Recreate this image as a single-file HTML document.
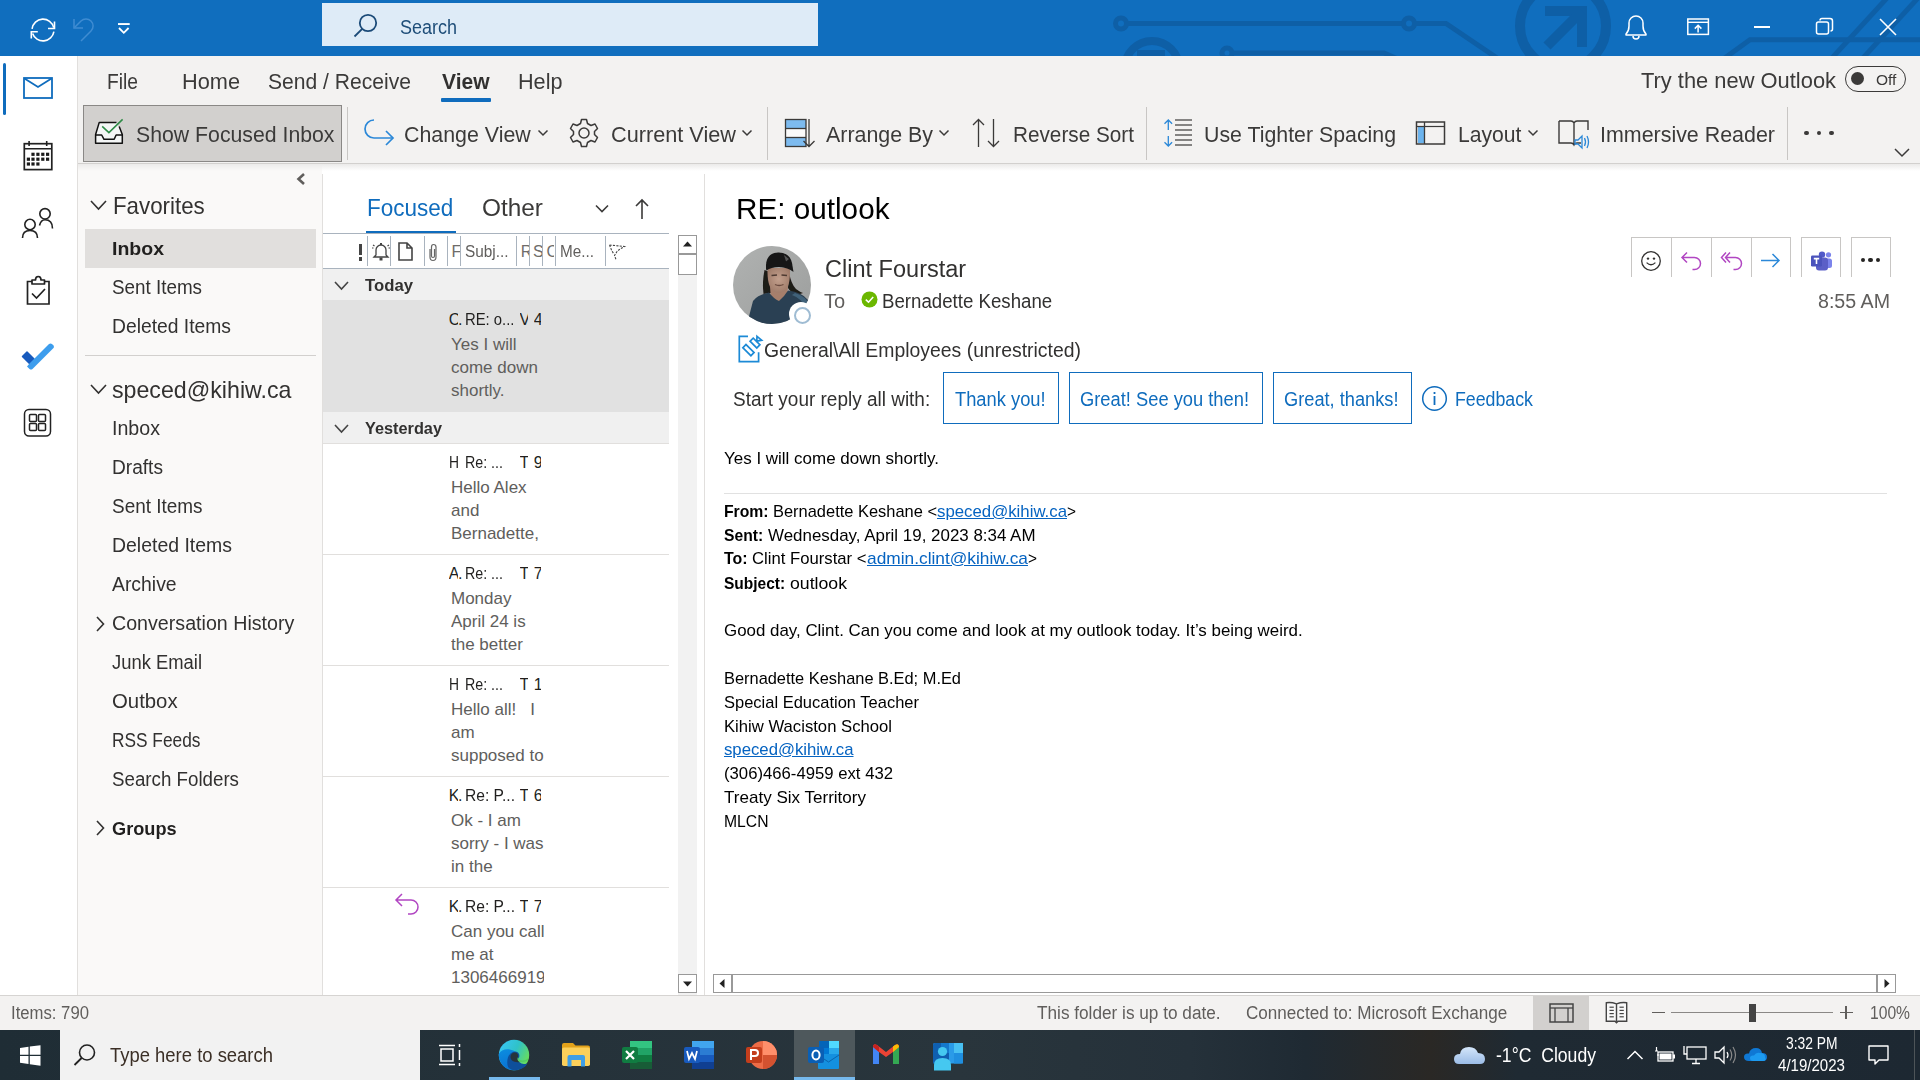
<!DOCTYPE html>
<html><head><meta charset="utf-8"><title>Outlook</title>
<style>
html,body{margin:0;padding:0;width:1920px;height:1080px;overflow:hidden;background:#fff;position:relative;font-family:"Liberation Sans", sans-serif}
.t{position:absolute;white-space:pre;line-height:1;transform-origin:0 0}
svg{overflow:visible}
</style></head><body>
<div style="position:absolute;left:0px;top:0px;width:1920px;height:56px;background:#106ebe"></div>
<div style="position:absolute;left:0px;top:56px;width:77px;height:939px;background:#ffffff"></div>
<div style="position:absolute;left:77px;top:56px;width:1px;height:939px;background:#e1dfdd"></div>
<div style="position:absolute;left:78px;top:56px;width:1842px;height:107px;background:#f3f2f1"></div>
<div style="position:absolute;left:78px;top:163px;width:1842px;height:1px;background:#d2d0ce"></div>
<div style="position:absolute;left:78px;top:164px;width:1842px;height:7px;background:linear-gradient(#ebeae9,rgba(255,255,255,0))"></div>
<div style="position:absolute;left:78px;top:171px;width:244px;height:824px;background:#faf9f8"></div>
<div style="position:absolute;left:78px;top:164px;width:244px;height:7px;background:linear-gradient(#ecebea,#faf9f8)"></div>
<div style="position:absolute;left:322px;top:174px;width:1px;height:821px;background:#e1dfdd"></div>
<div style="position:absolute;left:323px;top:171px;width:382px;height:824px;background:#ffffff"></div>
<div style="position:absolute;left:704px;top:174px;width:1px;height:821px;background:#e1dfdd"></div>
<div style="position:absolute;left:705px;top:171px;width:1215px;height:824px;background:#ffffff"></div>
<div style="position:absolute;left:0px;top:996px;width:1920px;height:34px;background:#f3f2f1"></div>
<div style="position:absolute;left:0px;top:995px;width:1920px;height:1px;background:#d6d4d2"></div>
<div style="position:absolute;left:0px;top:1030px;width:1920px;height:50px;background:linear-gradient(90deg,#1f2d35 0%,#25323a 30%,#29353c 50%,#25313a 62%,#1f2a33 68%,#2a2825 74.5%,#1f2a33 79%,#1d2832 100%)"></div>
<svg style="position:absolute;left:1100px;top:0px;overflow:hidden;" width="820" height="56" viewBox="0 0 820 56">
<g fill="none" stroke="#0e5fa6" stroke-width="5">
<circle cx="21" cy="23.5" r="5.5"/>
<line x1="27" y1="23.5" x2="303" y2="23.5"/>
<circle cx="309" cy="23.5" r="5.5"/>
<polyline points="315,23.5 346,23.5 400,60"/>
<circle cx="52" cy="68" r="27" stroke-width="8"/>
<circle cx="127" cy="53" r="5"/>
<polyline points="132,53 284,53 300,60"/>
<circle cx="463" cy="26" r="43" stroke-width="10"/>
<polyline points="622,60 650,39.7 820,39.7"/>
<line x1="732" y1="58" x2="787" y2="-2"/>
<line x1="763" y1="58" x2="818" y2="-2"/>
</g>
<rect x="37" y="50" width="28" height="12" fill="#0e5fa6"/>
<g fill="#0e5fa6"><rect x="445" y="6" width="42" height="10"/><rect x="477" y="6" width="10" height="41"/></g>
<line x1="447" y1="46" x2="482" y2="11" stroke="#0e5fa6" stroke-width="10"/>
</svg>
<svg style="position:absolute;left:29px;top:17px;" width="28" height="28" viewBox="0 0 28 28"><g fill="none" stroke="#fff" stroke-width="1.6"><path d="M3.07 11.8 A11 11 0 0 1 24.7 10.6"/><path d="M24.9 14.6 A11 11 0 0 1 3.6 16.4"/><path d="M25.5 4.5 L25.5 11.5 L19 11.5"/><path d="M2.3 21.5 L2.3 14.8 L8.8 14.8"/></g></svg>
<svg style="position:absolute;left:71px;top:16px;" width="28" height="28" viewBox="0 0 28 28"><g fill="none" stroke="#3f8cd2" stroke-width="1.5">
<path d="M3 3 L3 12 L12 12"/><path d="M3.5 11.5 L10 5 A7 7 0 0 1 20 15 L10 25"/></g></svg>
<svg style="position:absolute;left:116px;top:20px;" width="16" height="16" viewBox="0 0 16 16"><rect x="2" y="3.1" width="11.7" height="1.9" fill="#fff"/><path d="M3 8 L7.8 12.8 L12.6 8" fill="none" stroke="#fff" stroke-width="1.8"/></svg>
<div style="position:absolute;left:322px;top:3px;width:496px;height:43px;background:#deebf7"></div>
<svg style="position:absolute;left:350px;top:11px;" width="30" height="28" viewBox="0 0 30 28"><circle cx="18" cy="12" r="8.2" fill="none" stroke="#1b4a78" stroke-width="1.8"/><line x1="12.2" y1="17.8" x2="4.5" y2="25.5" stroke="#1b4a78" stroke-width="1.8"/></svg>
<svg style="position:absolute;left:1622px;top:12px;" width="28" height="32" viewBox="0 0 28 32"><path d="M4 23 L4 22 Q7 19 7 14 L7 11 A7 7 0 0 1 21 11 L21 14 Q21 19 24 22 L24 23 Z" fill="none" stroke="#fff" stroke-width="1.5" stroke-linejoin="round"/><path d="M11 24 A3 3 0 0 0 17 24" fill="none" stroke="#fff" stroke-width="1.5"/></svg>
<svg style="position:absolute;left:1686px;top:16px;" width="26" height="22" viewBox="0 0 26 22"><rect x="1.8" y="3" width="20.6" height="15.4" fill="none" stroke="#fff" stroke-width="1.5"/><line x1="1.8" y1="6.3" x2="22.4" y2="6.3" stroke="#fff" stroke-width="1.4"/><path d="M12.1 16.5 L12.1 9.5 M8.8 12.6 L12.1 9.3 L15.4 12.6" fill="none" stroke="#fff" stroke-width="1.5"/></svg>
<div style="position:absolute;left:1754px;top:26px;width:16px;height:2px;background:#fff"></div>
<svg style="position:absolute;left:1815px;top:17px;" width="20" height="20" viewBox="0 0 20 20"><rect x="1.5" y="5" width="12" height="12" rx="2" fill="none" stroke="#fff" stroke-width="1.5"/><path d="M5 3.5 Q5 1.5 7 1.5 L15 1.5 Q17.5 1.5 17.5 4 L17.5 12 Q17.5 14 15.5 14" fill="none" stroke="#fff" stroke-width="1.5"/></svg>
<svg style="position:absolute;left:1879px;top:18px;" width="18" height="18" viewBox="0 0 18 18"><path d="M1 1 L17 17 M17 1 L1 17" stroke="#fff" stroke-width="1.6"/></svg>
<div style="position:absolute;left:3px;top:63px;width:3px;height:52px;background:#0f6cbd;border-radius:2px"></div>
<svg style="position:absolute;left:22px;top:76px;" width="32" height="24" viewBox="0 0 32 24"><rect x="2" y="2" width="28" height="20" fill="none" stroke="#0f6cbd" stroke-width="1.8"/><path d="M2.5 2.5 L16 11 L29.5 2.5" fill="none" stroke="#0f6cbd" stroke-width="1.8"/></svg>
<svg style="position:absolute;left:22px;top:140px;" width="32" height="32" viewBox="0 0 32 32"><rect x="2.3" y="3.7" width="27.5" height="25.9" fill="none" stroke="#222" stroke-width="1.7"/><line x1="2.3" y1="8.75" x2="29.8" y2="8.75" stroke="#222" stroke-width="1.5"/><line x1="7.1" y1="1" x2="7.1" y2="6" stroke="#222" stroke-width="1.6"/><line x1="24.7" y1="1" x2="24.7" y2="6" stroke="#222" stroke-width="1.6"/><rect x="9.4" y="12.7" width="3.2" height="3.2" fill="#1a1a1a"/><rect x="14.3" y="12.7" width="3.2" height="3.2" fill="#1a1a1a"/><rect x="19.2" y="12.7" width="3.2" height="3.2" fill="#1a1a1a"/><rect x="24.0" y="12.7" width="3.2" height="3.2" fill="#1a1a1a"/><rect x="4.8" y="17.6" width="3.2" height="3.2" fill="#1a1a1a"/><rect x="9.4" y="17.6" width="3.2" height="3.2" fill="#1a1a1a"/><rect x="14.3" y="17.6" width="3.2" height="3.2" fill="#1a1a1a"/><rect x="19.2" y="17.6" width="3.2" height="3.2" fill="#1a1a1a"/><rect x="24.0" y="17.6" width="3.2" height="3.2" fill="#1a1a1a"/><rect x="4.8" y="22.4" width="3.2" height="3.2" fill="#1a1a1a"/><rect x="9.4" y="22.4" width="3.2" height="3.2" fill="#1a1a1a"/><rect x="14.3" y="22.4" width="3.2" height="3.2" fill="#1a1a1a"/></svg>
<svg style="position:absolute;left:20px;top:205px;" width="36" height="36" viewBox="0 0 36 36"><g fill="none" stroke="#222" stroke-width="1.6"><circle cx="10" cy="19.5" r="5.2"/><path d="M2.5 33 Q2.5 25.5 10 25.5 Q17.5 25.5 17.5 33"/><circle cx="25" cy="8.8" r="5.2"/><path d="M19.5 20.5 Q21 14.8 25 14.8 Q32.5 14.8 32.5 23.5"/></g></svg>
<svg style="position:absolute;left:24px;top:272px;" width="28" height="36" viewBox="0 0 28 36"><g fill="none" stroke="#222" stroke-width="1.7"><path d="M8 9.5 L3.5 9.5 L3.5 32 L25 32 L25 9.5 L20.5 9.5"/><path d="M8 12 L8 8 L11.5 8 Q11.5 4.5 14.25 4.5 Q17 4.5 17 8 L20.5 8 L20.5 12 Z" stroke-linejoin="round"/><path d="M8 21.5 L12.5 26 L21 17"/></g></svg>
<svg style="position:absolute;left:20px;top:340px;" width="36" height="32" viewBox="0 0 36 32"><path d="M2.5 16.5 L7 12 L14 19 L9.5 23.5 Z" fill="#185abd" stroke="#185abd" stroke-width="1.5" stroke-linejoin="round"/><path d="M9.5 23.5 L29 4 Q30.5 2.8 32 4 L33.5 5.5 Q34.5 7 33.5 8 L12.5 29 Q11 30 9.5 29 L7 26.5 Z" fill="#3d9ded"/><path d="M7.5 26 L14 19.5 L9.5 15 L5 20 Z" fill="#2b7cd3" opacity="0"/></svg>
<svg style="position:absolute;left:22px;top:407px;" width="32" height="32" viewBox="0 0 32 32"><g fill="none" stroke="#222" stroke-width="1.5"><rect x="2.5" y="2.5" width="26" height="26.5" rx="4.5"/><rect x="7.5" y="7.5" width="7" height="7" rx="1"/><rect x="16.5" y="7.5" width="7" height="7" rx="1"/><rect x="7.5" y="16.5" width="7" height="7" rx="1"/><rect x="16.5" y="16.5" width="7" height="7" rx="1"/></g></svg>
<div style="position:absolute;left:441px;top:98px;width:50px;height:4px;background:#0f6cbd;border-radius:1px"></div>
<div style="position:absolute;left:1845px;top:66px;width:61px;height:26px;border:1.3px solid #3b3a39;border-radius:13px;box-sizing:border-box"></div>
<div style="position:absolute;left:1850.5px;top:71.6px;width:13.6px;height:13.6px;background:#3b3a39;border-radius:50%"></div>
<div style="position:absolute;left:83px;top:105px;width:259px;height:57px;background:#d2d0ce;border:1px solid #8a8886;box-sizing:border-box"></div>
<svg style="position:absolute;left:93px;top:117px;" width="32" height="28" viewBox="0 0 32 28"><path d="M6.25 5.4 L23.5 5.4 L29.3 17.5 L29.3 26.3 L2.6 26.3 L2.6 17.5 Z" fill="#f4f6f6"/><path d="M23.5 5.4 L6.25 5.4 L2.6 17.5 L2.6 26.3 L29.3 26.3 L29.3 17.5 L26.2 9.5" fill="none" stroke="#111" stroke-width="1.5" stroke-linejoin="round"/><path d="M2.6 18 L8.7 18 L11 22.3 L21.2 22.3 L23.1 18 L29.3 18" fill="none" stroke="#111" stroke-width="1.5" stroke-linejoin="round"/><path d="M9.2 9.4 L15.9 15.6 L29.6 2.4" fill="none" stroke="#2e8b47" stroke-width="1.5"/></svg>
<div style="position:absolute;left:347px;top:107px;width:1px;height:53px;background:#c8c6c4"></div>
<svg style="position:absolute;left:364px;top:117px;" width="32" height="32" viewBox="0 0 32 32"><path d="M10 3 A9 9 0 0 0 10 21 L28 21" fill="none" stroke="#2b88d8" stroke-width="1.7"/><path d="M22 14 L29 21 L22 28" fill="none" stroke="#2b88d8" stroke-width="1.7"/></svg>
<svg style="position:absolute;left:537px;top:128.5px;" width="12" height="8" viewBox="0 0 12 8"><path d="M1.5 1.5 L6 6 L10.5 1.5" fill="none" stroke="#3b3a39" stroke-width="1.5"/></svg>
<svg style="position:absolute;left:568px;top:117px;" width="32" height="32" viewBox="0 0 32 32"><g fill="none" stroke="#3b3a39" stroke-width="1.5"><circle cx="16" cy="16" r="5"/><path d="M13.5 2.5 L18.5 2.5 L19.5 6.5 L23 8.5 L27 7 L29.5 11.5 L26.5 14.5 L26.5 17.5 L29.5 20.5 L27 25 L23 23.5 L19.5 25.5 L18.5 29.5 L13.5 29.5 L12.5 25.5 L9 23.5 L5 25 L2.5 20.5 L5.5 17.5 L5.5 14.5 L2.5 11.5 L5 7 L9 8.5 L12.5 6.5 Z" stroke-linejoin="round"/></g></svg>
<svg style="position:absolute;left:741px;top:128.5px;" width="12" height="8" viewBox="0 0 12 8"><path d="M1.5 1.5 L6 6 L10.5 1.5" fill="none" stroke="#3b3a39" stroke-width="1.5"/></svg>
<div style="position:absolute;left:767px;top:107px;width:1px;height:53px;background:#c8c6c4"></div>
<svg style="position:absolute;left:784px;top:118px;" width="32" height="32" viewBox="0 0 32 32"><rect x="1.5" y="1.5" width="20.5" height="9" fill="#7dbbef"/><rect x="1.5" y="10.5" width="20.5" height="9" fill="#fafafa"/><rect x="1.5" y="19.5" width="20.5" height="9" fill="#7dbbef"/><rect x="1.5" y="1.5" width="20.5" height="27" fill="none" stroke="#3b3a39" stroke-width="1.3"/><line x1="1.5" y1="10.5" x2="22" y2="10.5" stroke="#3b3a39" stroke-width="1.3"/><line x1="1.5" y1="19.5" x2="22" y2="19.5" stroke="#3b3a39" stroke-width="1.3"/><path d="M25 1 L25 28.5 M19.5 23 L25 28.5 L30.5 23" fill="none" stroke="#3b3a39" stroke-width="1.3"/></svg>
<svg style="position:absolute;left:938px;top:128.5px;" width="12" height="8" viewBox="0 0 12 8"><path d="M1.5 1.5 L6 6 L10.5 1.5" fill="none" stroke="#3b3a39" stroke-width="1.5"/></svg>
<svg style="position:absolute;left:970px;top:116px;" width="32" height="34" viewBox="0 0 32 34"><path d="M8.5 31 L8.5 3.5 M3 9 L8.5 3.5 L14 9" fill="none" stroke="#3b3a39" stroke-width="1.3"/><path d="M23.5 3 L23.5 30.5 M18 25 L23.5 30.5 L29 25" fill="none" stroke="#3b3a39" stroke-width="1.3"/></svg>
<div style="position:absolute;left:1146px;top:107px;width:1px;height:53px;background:#c8c6c4"></div>
<svg style="position:absolute;left:1160px;top:116px;" width="36" height="34" viewBox="0 0 36 34"><path d="M8.3 14 L8.3 4 M4.5 7.8 L8.3 4 L12.1 7.8 M8.3 20 L8.3 30 M4.5 26.2 L8.3 30 L12.1 26.2" fill="none" stroke="#2b88d8" stroke-width="1.3"/><g stroke="#3b3a39" stroke-width="1.2"><line x1="15" y1="4" x2="32" y2="4"/><line x1="15" y1="9" x2="32" y2="9"/><line x1="15" y1="14" x2="32" y2="14"/><line x1="15" y1="19" x2="32" y2="19"/><line x1="15" y1="24" x2="32" y2="24"/><line x1="15" y1="29" x2="32" y2="29"/></g></svg>
<svg style="position:absolute;left:1415px;top:120px;" width="32" height="28" viewBox="0 0 32 28"><rect x="1.5" y="2" width="28" height="22" fill="none" stroke="#3b3a39" stroke-width="1.5"/><rect x="3" y="7" width="6" height="16" fill="#6cb4ee"/><line x1="9.5" y1="2" x2="9.5" y2="24" stroke="#3b3a39" stroke-width="1.3"/><line x1="1.5" y1="6.5" x2="29.5" y2="6.5" stroke="#3b3a39" stroke-width="1.2"/></svg>
<svg style="position:absolute;left:1527px;top:129px;" width="12" height="8" viewBox="0 0 12 8"><path d="M1.5 1.5 L6 6 L10.5 1.5" fill="none" stroke="#3b3a39" stroke-width="1.5"/></svg>
<svg style="position:absolute;left:1557px;top:116px;" width="36" height="34" viewBox="0 0 36 34"><path d="M2 5 L2 27 L14 27 Q16 27 17 29 Q18 27 20 27 L24 27 M2 5 L14 5 Q16 5 17 7 Q18 5 20 5 L31 5 L31 14 M17 7 L17 29" fill="none" stroke="#3b3a39" stroke-width="1.4"/><path d="M18 24 L21 24 L25 20 L25 32 L21 28 L18 28 Z" fill="none" stroke="#2b88d8" stroke-width="1.3"/><path d="M27.5 22 Q29.5 26 27.5 30 M30 20 Q33 26 30 32" fill="none" stroke="#2b88d8" stroke-width="1.3"/></svg>
<div style="position:absolute;left:1787px;top:107px;width:1px;height:53px;background:#c8c6c4"></div>
<div style="position:absolute;left:1804.3px;top:131px;width:4.4px;height:4.4px;background:#3b3a39;border-radius:3px"></div>
<div style="position:absolute;left:1816.8px;top:131px;width:4.4px;height:4.4px;background:#3b3a39;border-radius:3px"></div>
<div style="position:absolute;left:1829.3px;top:131px;width:4.4px;height:4.4px;background:#3b3a39;border-radius:3px"></div>
<svg style="position:absolute;left:1893px;top:147px;" width="18" height="12" viewBox="0 0 18 12"><path d="M2 2 L9 9 L16 2" fill="none" stroke="#3b3a39" stroke-width="1.5"/></svg>
<svg style="position:absolute;left:295px;top:172px;" width="12" height="14" viewBox="0 0 12 14"><path d="M9 2 L3.5 7 L9 12" fill="none" stroke="#605e5c" stroke-width="2.6"/></svg>
<svg style="position:absolute;left:89px;top:198px;" width="20" height="14" viewBox="0 0 20 14"><path d="M2 3 L9.5 11 L17 3" fill="none" stroke="#323130" stroke-width="1.6"/></svg>
<div style="position:absolute;left:85px;top:229px;width:231px;height:38.5px;background:#e1dfdd"></div>
<div style="position:absolute;left:85px;top:355px;width:231px;height:1px;background:#d2d0ce"></div>
<svg style="position:absolute;left:89px;top:382px;" width="20" height="14" viewBox="0 0 20 14"><path d="M2 3 L9.5 11 L17 3" fill="none" stroke="#323130" stroke-width="1.6"/></svg>
<svg style="position:absolute;left:94px;top:615px;" width="12" height="18" viewBox="0 0 12 18"><path d="M3 2 L9.5 9 L3 16" fill="none" stroke="#323130" stroke-width="1.6"/></svg>
<svg style="position:absolute;left:94px;top:819px;" width="12" height="18" viewBox="0 0 12 18"><path d="M3 2 L9.5 9 L3 16" fill="none" stroke="#323130" stroke-width="1.6"/></svg>
<svg style="position:absolute;left:594px;top:203px;" width="16" height="12" viewBox="0 0 16 12"><path d="M2 2.5 L8 8.5 L14 2.5" fill="none" stroke="#3b3a39" stroke-width="1.6"/></svg>
<svg style="position:absolute;left:634px;top:198px;" width="16" height="22" viewBox="0 0 16 22"><path d="M8 21 L8 2 M2 8 L8 2 L14 8" fill="none" stroke="#3b3a39" stroke-width="1.6"/></svg>
<div style="position:absolute;left:323px;top:233px;width:346px;height:1px;background:#a9b3be"></div>
<div style="position:absolute;left:366px;top:231px;width:90px;height:2px;background:#0f6cbd"></div>
<div style="position:absolute;left:323px;top:268px;width:346px;height:1px;background:#a9b3be"></div>
<div style="position:absolute;left:367px;top:236px;width:1px;height:30px;background:#a9b3be"></div>
<div style="position:absolute;left:390px;top:236px;width:1px;height:30px;background:#a9b3be"></div>
<div style="position:absolute;left:424px;top:236px;width:1px;height:30px;background:#a9b3be"></div>
<div style="position:absolute;left:447px;top:236px;width:1px;height:30px;background:#a9b3be"></div>
<div style="position:absolute;left:460px;top:236px;width:1px;height:30px;background:#a9b3be"></div>
<div style="position:absolute;left:516px;top:236px;width:1px;height:30px;background:#a9b3be"></div>
<div style="position:absolute;left:529px;top:236px;width:1px;height:30px;background:#a9b3be"></div>
<div style="position:absolute;left:542px;top:236px;width:1px;height:30px;background:#a9b3be"></div>
<div style="position:absolute;left:555px;top:236px;width:1px;height:30px;background:#a9b3be"></div>
<div style="position:absolute;left:605px;top:236px;width:1px;height:30px;background:#a9b3be"></div>
<div style="position:absolute;left:358.5px;top:244px;width:3.5px;height:11px;background:#444"></div>
<div style="position:absolute;left:358.5px;top:257px;width:3.5px;height:3.5px;background:#444"></div>
<svg style="position:absolute;left:371px;top:241px;" width="20" height="21" viewBox="0 0 20 21"><path d="M3 16 L5 14 L5 9 A5 5 0 0 1 15 9 L15 14 L17 16 Z" fill="none" stroke="#444" stroke-width="1.3"/><rect x="8.5" y="16.5" width="3" height="3" fill="#444"/><rect x="9" y="2" width="2" height="2" fill="#444"/>
<path d="M1 7 L2.5 7 M17.5 7 L19 7 M2 4 L3.5 5 M16.5 5 L18 4" stroke="#444" stroke-width="1.2"/></svg>
<svg style="position:absolute;left:397px;top:241px;" width="18" height="21" viewBox="0 0 18 21"><path d="M2 2 L10 2 L15 7 L15 19 L2 19 Z M10 2 L10 7 L15 7" fill="none" stroke="#444" stroke-width="1.6"/></svg>
<svg style="position:absolute;left:426px;top:243px;" width="14" height="19" viewBox="0 0 14 19"><path d="M4 6 L4 14 Q4 17.5 7 17.5 Q10 17.5 10 14 L10 4 Q10 1.5 7.5 1.5 Q5.5 1.5 5.5 4 L5.5 13 Q5.5 14.5 7 14.5 Q8.5 14.5 8.5 13 L8.5 6" fill="none" stroke="#666" stroke-width="1.2"/></svg>
<svg style="position:absolute;left:607px;top:242px;" width="20" height="20" viewBox="0 0 20 20"><path d="M2.5 3 L17.5 4.5 L13 7 L10 9.5 L7.5 13.5 L9 17.5 M2.5 3 L4.5 8 L6.5 11.5" fill="none" stroke="#444" stroke-width="1.1" stroke-dasharray="2.2 1.2"/></svg>
<div style="position:absolute;left:678px;top:275px;width:19px;height:720px;background:#f2f2f2"></div>
<div style="position:absolute;left:678px;top:235px;width:19px;height:19px;background:#fff;border:1px solid #999999;box-sizing:border-box"></div>
<svg style="position:absolute;left:682px;top:240px;" width="11" height="8" viewBox="0 0 11 8"><path d="M1 6.5 L5.5 1.5 L10 6.5 Z" fill="#222"/></svg>
<div style="position:absolute;left:678px;top:254px;width:19px;height:21px;background:#fff;border:1px solid #999999;box-sizing:border-box"></div>
<div style="position:absolute;left:678px;top:974px;width:19px;height:19px;background:#fff;border:1px solid #999999;box-sizing:border-box"></div>
<svg style="position:absolute;left:682px;top:980px;" width="11" height="8" viewBox="0 0 11 8"><path d="M1 1.5 L5.5 6.5 L10 1.5 Z" fill="#222"/></svg>
<div style="position:absolute;left:697px;top:171px;width:1px;height:824px;background:#ffffff"></div>
<div style="position:absolute;left:323px;top:269px;width:346px;height:31px;background:#f0f0f0"></div>
<svg style="position:absolute;left:333px;top:280px;" width="17" height="12" viewBox="0 0 17 12"><path d="M2 2 L8.5 9 L15 2" fill="none" stroke="#444" stroke-width="1.6"/></svg>
<div style="position:absolute;left:323px;top:300px;width:346px;height:112px;background:#e1e1e1"></div>
<div style="position:absolute;left:323px;top:412px;width:346px;height:31px;background:#f0f0f0"></div>
<div style="position:absolute;left:323px;top:443px;width:346px;height:1px;background:#e1dfdd"></div>
<svg style="position:absolute;left:333px;top:423px;" width="17" height="12" viewBox="0 0 17 12"><path d="M2 2 L8.5 9 L15 2" fill="none" stroke="#444" stroke-width="1.6"/></svg>
<div style="position:absolute;left:323px;top:554px;width:346px;height:1px;background:#e1dfdd"></div>
<div style="position:absolute;left:323px;top:665px;width:346px;height:1px;background:#e1dfdd"></div>
<div style="position:absolute;left:323px;top:776px;width:346px;height:1px;background:#e1dfdd"></div>
<div style="position:absolute;left:323px;top:887px;width:346px;height:1px;background:#e1dfdd"></div>
<svg style="position:absolute;left:394px;top:892px;" width="28" height="26" viewBox="0 0 28 26"><path d="M8 2 L2 8 L8 14 M2 8 L17 8 A7 7 0 0 1 17 22 L14 22" fill="none" stroke="#b146c2" stroke-width="1.5"/></svg>
<svg style="position:absolute;left:733px;top:246px;" width="78" height="78" viewBox="0 0 78 78"><defs><clipPath id="avc"><circle cx="39" cy="39" r="39"/></clipPath><linearGradient id="avbg" x1="0" y1="0" x2="1" y2="1"><stop offset="0" stop-color="#b0b2b1"/><stop offset="1" stop-color="#9c9e9d"/></linearGradient><radialGradient id="skin" cx="0.5" cy="0.45" r="0.6"><stop offset="0" stop-color="#c29f8c"/><stop offset="1" stop-color="#9e7a68"/></radialGradient><filter id="avb" x="-0.1" y="-0.1" width="1.2" height="1.2"><feGaussianBlur stdDeviation="0.7"/></filter></defs>
<g clip-path="url(#avc)">
<rect width="78" height="78" fill="url(#avbg)"/>
<g filter="url(#avb)">
<path d="M31.5 24 Q29 36 30.5 48 L38 47 L37 26 Z" fill="#1f1b19"/>
<path d="M56 26 Q58 38 63 43 Q67 46 70 47 L64 49 Q58 47 55 42 Z" fill="#1f1b19"/>
<path d="M37 38 L38 57 L54 57 L55 38 Z" fill="#a67f6c"/>
<path d="M34.5 22 Q34 40 40 45 Q46 48.5 52 45 Q57.5 40 57 22 Z" fill="url(#skin)"/>
<path d="M33 23 Q32 7 45 6.5 Q58 6 59.5 20 L60.5 26 Q55 21.5 46 21 Q38 21 33.5 24.5 Z" fill="#161616"/>
<path d="M51 9 L56 13 L53 15.5 Z" fill="#555"/>
<path d="M38.5 29.5 L44 29 M48.5 29 L54 29.5" stroke="#4e3a32" stroke-width="1.6"/>
<path d="M42 38.5 Q46 40.5 50.5 38.5" fill="none" stroke="#6b4b3f" stroke-width="1.3"/>
<path d="M14 78 L20 55 Q24 49 36 46.5 Q41 53 46 55 Q51 51 55 44.5 Q69 46 75 54 L80 66 L80 78 Z" fill="#2c4152"/>
<path d="M62 47 Q73 50 77 60 L73 62 Q68 52 59 49 Z" fill="#466a85" opacity="0.8"/>
</g>
</g></svg>
<div style="position:absolute;left:789px;top:302px;width:24px;height:24px;background:#fff;border-radius:50%"></div>
<div style="position:absolute;left:793.5px;top:306.5px;width:17px;height:17px;border:2px solid #9fbcd3;border-radius:50%;box-sizing:border-box"></div>
<svg style="position:absolute;left:860.5px;top:290.5px;" width="17" height="17" viewBox="0 0 17 17"><circle cx="8.5" cy="8.5" r="8" fill="#6bb700"/><path d="M4.8 8.7 L7.5 11.2 L12.2 6" fill="none" stroke="#fff" stroke-width="1.6"/></svg>
<div style="position:absolute;left:1631px;top:237px;width:160px;height:40px;border:1px solid #c8c6c4;border-bottom:none;box-sizing:border-box"></div>
<div style="position:absolute;left:1671px;top:237px;width:1px;height:40px;background:#c8c6c4"></div>
<div style="position:absolute;left:1711px;top:237px;width:1px;height:40px;background:#c8c6c4"></div>
<div style="position:absolute;left:1751px;top:237px;width:1px;height:40px;background:#c8c6c4"></div>
<div style="position:absolute;left:1801px;top:237px;width:40px;height:40px;border:1px solid #c8c6c4;border-bottom:none;box-sizing:border-box"></div>
<div style="position:absolute;left:1851px;top:237px;width:40px;height:40px;border:1px solid #c8c6c4;border-bottom:none;box-sizing:border-box"></div>
<svg style="position:absolute;left:1640px;top:250px;" width="22" height="22" viewBox="0 0 22 22"><circle cx="11" cy="11" r="9.3" fill="none" stroke="#323130" stroke-width="1.3"/><circle cx="8" cy="8.6" r="1.2" fill="#323130"/><circle cx="14" cy="8.6" r="1.2" fill="#323130"/><path d="M6.6 12.6 Q11 16.8 15.4 12.6" fill="none" stroke="#323130" stroke-width="1.3"/></svg>
<svg style="position:absolute;left:1680px;top:251px;" width="24" height="22" viewBox="0 0 24 22"><path d="M7 1.5 L2 6.5 L7 11.5 M2.5 6.5 L14.5 6.5 A6 6 0 0 1 14.5 18.5 L12.5 18.5" fill="none" stroke="#b146c2" stroke-width="1.5"/></svg>
<svg style="position:absolute;left:1720px;top:251px;" width="24" height="22" viewBox="0 0 24 22"><path d="M6 1.5 L1.5 6.5 L6 11.5 M10 1.5 L5.5 6.5 L10 11.5 M6 6.5 L15.5 6.5 A6 6 0 0 1 15.5 18.5 L13.5 18.5" fill="none" stroke="#b146c2" stroke-width="1.5"/></svg>
<svg style="position:absolute;left:1760px;top:252px;" width="22" height="18" viewBox="0 0 22 18"><path d="M1 8.5 L19 8.5 M12.5 2 L19 8.5 L12.5 15" fill="none" stroke="#2b88d8" stroke-width="1.5"/></svg>
<svg style="position:absolute;left:1811px;top:251px;" width="21" height="20" viewBox="0 0 21 20"><circle cx="17.5" cy="3.8" r="2.6" fill="#7b83eb"/><rect x="13" y="7.5" width="8" height="9.5" rx="2.5" fill="#7b83eb"/><circle cx="11" cy="3.6" r="3.2" fill="#5059c9"/><rect x="5" y="6.5" width="12" height="13" rx="3" fill="#5b5fc7"/><rect x="0" y="4.5" width="11" height="11" rx="1.3" fill="#4b53bc"/><path d="M2.8 7.6 L8.2 7.6 M5.5 7.6 L5.5 13" stroke="#fff" stroke-width="1.6"/></svg>
<div style="position:absolute;left:1860.5px;top:258.3px;width:4.2px;height:4.2px;background:#252423;border-radius:50%"></div>
<div style="position:absolute;left:1868.4px;top:258.3px;width:4.2px;height:4.2px;background:#252423;border-radius:50%"></div>
<div style="position:absolute;left:1876.3000000000002px;top:258.3px;width:4.2px;height:4.2px;background:#252423;border-radius:50%"></div>
<svg style="position:absolute;left:736.8px;top:333.8px;" width="28" height="30" viewBox="0 0 28 30"><g fill="none" stroke="#1c8ad6" stroke-width="1.7"><path d="M11 2.3 L2.3 2.3 L2.3 27.6 L21.6 27.6 L21.6 18.2"/><rect x="5.75" y="13.9" width="11.4" height="4.4" transform="rotate(45 11.45 16.1)"/><rect x="13.2" y="6.8" width="9.5" height="4.4" transform="rotate(45 17.96 9.06)"/><path d="M20 2.3 L24.7 6.2 L19.8 7.2 Z"/></g></svg>
<div style="position:absolute;left:943px;top:372px;width:116px;height:52px;border:1.5px solid #0f6cbd;box-sizing:border-box"></div>
<div style="position:absolute;left:1069px;top:372px;width:194px;height:52px;border:1.5px solid #0f6cbd;box-sizing:border-box"></div>
<div style="position:absolute;left:1273px;top:372px;width:139px;height:52px;border:1.5px solid #0f6cbd;box-sizing:border-box"></div>
<svg style="position:absolute;left:1421px;top:385px;" width="27" height="27" viewBox="0 0 27 27"><circle cx="13.5" cy="13.5" r="11.8" fill="none" stroke="#0f6cbd" stroke-width="1.5"/><rect x="12.6" y="11" width="1.8" height="9" fill="#0f6cbd"/><rect x="12.6" y="7" width="1.8" height="2" fill="#0f6cbd"/></svg>
<div style="position:absolute;left:724px;top:493px;width:1163px;height:1px;background:#e1e1e1"></div>
<div style="position:absolute;left:713px;top:974px;width:1183px;height:19px;background:#f0f0f0"></div>
<div style="position:absolute;left:713px;top:974px;width:19px;height:19px;background:#fff;border:1px solid #999999;box-sizing:border-box"></div>
<svg style="position:absolute;left:717px;top:978px;" width="10" height="11" viewBox="0 0 10 11"><path d="M7.5 1 L2.5 5.5 L7.5 10 Z" fill="#222"/></svg>
<div style="position:absolute;left:732px;top:974px;width:1145px;height:19px;background:#fff;border:1px solid #999999;box-sizing:border-box"></div>
<div style="position:absolute;left:1877px;top:974px;width:19px;height:19px;background:#fff;border:1px solid #999999;box-sizing:border-box"></div>
<svg style="position:absolute;left:1882px;top:978px;" width="10" height="11" viewBox="0 0 10 11"><path d="M2.5 1 L7.5 5.5 L2.5 10 Z" fill="#222"/></svg>
<div style="position:absolute;left:1533px;top:996px;width:56px;height:34px;background:#d2d0ce"></div>
<svg style="position:absolute;left:1548px;top:1001px;" width="28" height="24" viewBox="0 0 28 24"><rect x="2" y="3" width="23" height="18" fill="none" stroke="#444" stroke-width="1.5"/><line x1="2" y1="7" x2="25" y2="7" stroke="#444" stroke-width="1.3"/><line x1="7" y1="7" x2="7" y2="21" stroke="#444" stroke-width="1.3"/><line x1="20" y1="7" x2="20" y2="21" stroke="#444" stroke-width="1.3"/></svg>
<svg style="position:absolute;left:1604px;top:1001px;" width="28" height="24" viewBox="0 0 28 24"><path d="M2.3 1.8 Q7 1 12.5 2.8 Q18 1 22.7 1.8 L22.7 20.2 L14 20.2 L12.5 21.8 L11 20.2 L2.3 20.2 Z M12.5 2.8 L12.5 20.5" fill="#f8f8f8" stroke="#444" stroke-width="1.4"/><g stroke="#444" stroke-width="1.2"><line x1="5.5" y1="6.2" x2="9.8" y2="6.2"/><line x1="15.5" y1="6.2" x2="19.8" y2="6.2"/><line x1="5.5" y1="9.4" x2="9.8" y2="9.4"/><line x1="15.5" y1="9.4" x2="19.8" y2="9.4"/><line x1="5.5" y1="12.6" x2="9.8" y2="12.6"/><line x1="15.5" y1="12.6" x2="19.8" y2="12.6"/><line x1="5.5" y1="15.8" x2="9.8" y2="15.8"/><line x1="15.5" y1="15.8" x2="19.8" y2="15.8"/></g></svg>
<div style="position:absolute;left:1652px;top:1012px;width:13px;height:1.4px;background:#605e5c"></div>
<div style="position:absolute;left:1671px;top:1012px;width:162px;height:1.2px;background:#8a8886"></div>
<div style="position:absolute;left:1749px;top:1004px;width:7px;height:18px;background:#444"></div>
<div style="position:absolute;left:1839.5px;top:1012px;width:13px;height:1.4px;background:#605e5c"></div>
<div style="position:absolute;left:1845.3px;top:1006px;width:1.4px;height:13px;background:#605e5c"></div>
<svg style="position:absolute;left:20px;top:1045px;" width="21" height="21" viewBox="0 0 21 21"><path d="M0 3 L8.5 1.8 L8.5 9.8 L0 9.8 Z M9.8 1.6 L20.5 0.2 L20.5 9.8 L9.8 9.8 Z M0 11 L8.5 11 L8.5 19 L0 17.8 Z M9.8 11 L20.5 11 L20.5 20.8 L9.8 19.3 Z" fill="#fff"/></svg>
<div style="position:absolute;left:60px;top:1030px;width:360px;height:50px;background:#f2f2f2"></div>
<svg style="position:absolute;left:73px;top:1043px;" width="24" height="24" viewBox="0 0 24 24"><circle cx="14" cy="9.5" r="7.5" fill="none" stroke="#222" stroke-width="1.6"/><line x1="8.6" y1="15" x2="1.5" y2="22" stroke="#222" stroke-width="1.8"/></svg>
<svg style="position:absolute;left:438px;top:1044px;" width="24" height="22" viewBox="0 0 24 22"><path d="M1 1.5 L17 1.5 M1 20.5 L17 20.5 M3 5 L15 5 L15 17 L3 17 Z" fill="none" stroke="#fff" stroke-width="1.5"/><path d="M21.5 0 L21.5 3 M21.5 6 L21.5 16 M21.5 19 L21.5 22" stroke="#fff" stroke-width="1.5"/></svg>
<svg style="position:absolute;left:498px;top:1039px;" width="32" height="32" viewBox="0 0 32 32"><defs><linearGradient id="eg1" x1="0" y1="0.2" x2="1" y2="0.7"><stop offset="0" stop-color="#38c6f4"/><stop offset="0.5" stop-color="#2fc2c8"/><stop offset="1" stop-color="#6fe04f"/></linearGradient><linearGradient id="eg2" x1="0" y1="0" x2="0.3" y2="1"><stop offset="0" stop-color="#0c8ee0"/><stop offset="1" stop-color="#0a72d2"/></linearGradient></defs>
<circle cx="16" cy="16" r="15.2" fill="url(#eg1)"/>
<path d="M0.8 15 C3 10 11 8.5 17 12.5 L13 24 L21 31 L16 31.2 A15.2 15.2 0 0 1 0.8 15 Z" fill="url(#eg2)"/>
<path d="M9.5 26 C8.5 19 11 13 17.5 12.5 C21 13 22 16 21 18.5 C18 22 23 25 27 25 C28 25 29 24.8 29.5 24.5 C27 29 21.5 31.3 16 31.2 C12.5 31 10 29 9.5 26 Z" fill="#0e4f9a"/>
<path d="M12.5 18.5 C12.5 15 14.5 13.5 17 13.5 C20 13.5 20.5 16.5 20 18 C19 20.5 20 22 22 23 C19 23.5 16 23 14 21.5 C13 20.5 12.5 19.5 12.5 18.5 Z" fill="#27343b"/>
<path d="M20 18 C19 20.5 19.5 21.5 21 22.5 C24 23.5 27 23 29.7 21.5 L30.5 19 C28 21.5 24.5 22 22 21 C20.5 20 20.2 19 20 18 Z" fill="#52cc63"/></svg>
<div style="position:absolute;left:489px;top:1077px;width:51px;height:3px;background:#76b9ed"></div>
<svg style="position:absolute;left:561px;top:1042px;" width="30" height="26" viewBox="0 0 30 26"><path d="M1 3 Q1 1 3 1 L12 1 L14.5 3.5 L27 3.5 Q29 3.5 29 5.5 L29 8 L1 8 Z" fill="#e3a21a"/><rect x="1" y="5.5" width="28" height="18.5" rx="1.8" fill="#fcd05a"/><path d="M6.5 24.5 L6.5 15 Q6.5 13 8.5 13 L22 13 Q24 13 24 15 L24 24.5 L20 24.5 L20 18 L10.5 18 L10.5 24.5 Z" fill="#3f9ee6"/></svg>
<svg style="position:absolute;left:622px;top:1040px;" width="31" height="30" viewBox="0 0 31 30"><rect x="8" y="1" width="22" height="28" rx="2" fill="#21a366"/><rect x="8" y="1" width="22" height="7" fill="#33c481"/><rect x="19" y="8" width="11" height="7" fill="#21a366"/><rect x="8" y="15" width="22" height="7" fill="#107c41"/><rect x="8" y="22" width="22" height="7" fill="#185c37"/><rect x="0" y="7" width="16" height="16" rx="2" fill="#107c41"/><path d="M4 11 L12 19 M12 11 L4 19" stroke="#fff" stroke-width="2.2"/></svg>
<svg style="position:absolute;left:684px;top:1040px;" width="31" height="30" viewBox="0 0 31 30"><rect x="8" y="1" width="22" height="28" rx="2" fill="#2b7cd3"/><rect x="8" y="1" width="22" height="7" fill="#41a5ee"/><rect x="8" y="15" width="22" height="7" fill="#185abd"/><rect x="8" y="22" width="22" height="7" fill="#103f91"/><rect x="0" y="7" width="16" height="16" rx="2" fill="#185abd"/><path d="M3 11 L5 19 L8 13 L11 19 L13 11" fill="none" stroke="#fff" stroke-width="1.7"/></svg>
<svg style="position:absolute;left:746px;top:1040px;" width="31" height="30" viewBox="0 0 31 30"><circle cx="17" cy="15" r="14" fill="#ed6c47"/><path d="M17 1 A14 14 0 0 1 31 15 L17 15 Z" fill="#ff8f6b"/><path d="M17 15 L31 15 A14 14 0 0 1 17 29 Z" fill="#d35230"/><rect x="0" y="7" width="16" height="16" rx="2" fill="#c43e1c"/><path d="M5 20 L5 10 L9 10 Q12 10 12 13 Q12 16 9 16 L5 16" fill="none" stroke="#fff" stroke-width="2"/></svg>
<div style="position:absolute;left:794px;top:1030px;width:61px;height:50px;background:#4e585c"></div>
<div style="position:absolute;left:794px;top:1077px;width:61px;height:3px;background:#76b9ed"></div>
<svg style="position:absolute;left:808px;top:1040px;" width="32" height="30" viewBox="0 0 32 30"><rect x="11" y="1" width="20" height="14" fill="#0078d4"/><rect x="21" y="1" width="10" height="7" fill="#50d9ff"/><rect x="11" y="1" width="10" height="7" fill="#0364b8"/><rect x="21" y="8" width="10" height="7" fill="#28a8ea"/><path d="M10 14 L31 14 L31 28 Q31 29 30 29 L11 29 Q10 29 10 28 Z" fill="#1490df"/><path d="M10 15 L20.5 22 L31 15" fill="none" stroke="#0a64ad" stroke-width="1"/><rect x="0" y="7" width="16" height="16" rx="2" fill="#0a5fb5"/><ellipse cx="8" cy="15" rx="3.6" ry="4.5" fill="none" stroke="#fff" stroke-width="2"/></svg>
<svg style="position:absolute;left:871px;top:1042px;" width="30" height="24" viewBox="0 0 30 24"><path d="M2 22 L2 5 Q2 1 6 3 L15 10 L24 3 Q28 1 28 5 L28 22 L22 22 L22 10 L15 15 L8 10 L8 22 Z" fill="#ea4335"/><path d="M2 5 L2 22 L8 22 L8 10 Z" fill="#4285f4"/><path d="M28 5 L28 22 L22 22 L22 10 Z" fill="#34a853"/><path d="M22 10 L28 5 Q28 1 24 3 L22 4.5 Z" fill="#fbbc04"/><path d="M2 5 Q2 1 6 3 L8 4.5 L8 10 Z" fill="#c5221f"/></svg>
<svg style="position:absolute;left:932px;top:1041px;" width="32" height="30" viewBox="0 0 32 30"><rect x="1" y="2" width="30" height="20.5" rx="2" fill="#2a9be8"/><path d="M3 2 L17 2 L17 22.5 L1 22.5 L1 4 Q1 2 3 2 Z" fill="#0f5fb0"/><rect x="9" y="2" width="8" height="10" fill="#1478cc"/><rect x="22" y="2" width="9" height="10" fill="#48c0f2"/><rect x="22" y="12" width="9" height="10.5" fill="#1f8fe0"/><circle cx="10.5" cy="10.5" r="4.6" fill="#45c8f0"/><path d="M2 29.5 L2 24 Q2 17 10.5 17 Q19 17 19 24 L19 29.5 Z" fill="#45c8f0"/></svg>
<svg style="position:absolute;left:1453px;top:1043px;" width="34" height="23" viewBox="0 0 34 23"><defs><linearGradient id="cl" x1="0" y1="0" x2="0" y2="1"><stop offset="0" stop-color="#d4e6fa"/><stop offset="1" stop-color="#9bbce6"/></linearGradient></defs><path d="M6 21 Q1 21 1 16 Q1 11 7 11 Q8 4 16 4 Q23 4 25 10 Q32 10 32 16 Q32 21 27 21 Z" fill="url(#cl)"/></svg>
<svg style="position:absolute;left:1626px;top:1049px;" width="18" height="12" viewBox="0 0 18 12"><path d="M1.5 10 L9 2.5 L16.5 10" fill="none" stroke="#fff" stroke-width="1.5"/></svg>
<svg style="position:absolute;left:1654px;top:1046px;" width="22" height="18" viewBox="0 0 22 18"><rect x="4" y="6" width="15" height="9" fill="none" stroke="#fff" stroke-width="1.3"/><rect x="5.5" y="7.5" width="12" height="6" fill="#fff"/><rect x="19" y="8.5" width="2" height="4" fill="#fff"/><path d="M1 5 L4 5 M2.5 1 L2.5 5 M4 8 L4 10" stroke="#fff" stroke-width="1.2"/></svg>
<svg style="position:absolute;left:1683px;top:1045px;" width="24" height="20" viewBox="0 0 24 20"><rect x="4" y="2" width="19" height="12" fill="none" stroke="#fff" stroke-width="1.3"/><path d="M13 14 L13 18 M9 18.5 L17 18.5 M1 1 L1 9 L4 9" fill="none" stroke="#fff" stroke-width="1.3"/></svg>
<svg style="position:absolute;left:1713px;top:1045px;" width="24" height="20" viewBox="0 0 24 20"><path d="M2 7 L6 7 L11 2 L11 18 L6 13 L2 13 Z" fill="none" stroke="#fff" stroke-width="1.3"/><path d="M14 7 Q16 10 14 13" fill="none" stroke="#fff" stroke-width="1.2"/><path d="M17 4.5 Q20.5 10 17 15.5 M20 2 Q25 10 20 18" fill="none" stroke="#8a8a8a" stroke-width="1.2"/></svg>
<svg style="position:absolute;left:1744px;top:1047px;" width="23" height="15" viewBox="0 0 23 15"><path d="M5 14 Q0 14 0 10 Q0 6 5 6.5 Q6 1 12 1 Q17 1 18 6 Q23 6 23 10 Q23 14 19 14 Z" fill="#0f78d4"/><path d="M9 14 Q6 14 6 11 Q6 8 10 8.5 Q12 5 16 6 Q21 6 21 10 Q23 14 19 14 Z" fill="#1d9bf0"/></svg>
<svg style="position:absolute;left:1867px;top:1044px;" width="24" height="22" viewBox="0 0 24 22"><path d="M2 2 L21 2 L21 16 L12 16 L8 20 L8 16 L2 16 Z" fill="none" stroke="#fff" stroke-width="1.4" stroke-linejoin="round"/></svg>
<div style="position:absolute;left:1914px;top:1030px;width:1px;height:50px;background:#4d5458"></div>
<div class="t" style="left:400.00px;top:17.00px;font-size:20px;color:#1f4e79;transform:scaleX(0.8994);">Search</div>
<div class="t" style="left:106.90px;top:71.00px;font-size:22px;color:#3b3a39;transform:scaleX(0.8744);">File</div>
<div class="t" style="left:181.60px;top:71.00px;font-size:22px;color:#3b3a39;transform:scaleX(0.9883);">Home</div>
<div class="t" style="left:268.30px;top:71.00px;font-size:22px;color:#3b3a39;transform:scaleX(0.9584);">Send / Receive</div>
<div class="t" style="left:441.50px;top:71.00px;font-size:22px;color:#323130;font-weight:700;transform:scaleX(0.9548);">View</div>
<div class="t" style="left:518.00px;top:71.00px;font-size:22px;color:#3b3a39;transform:scaleX(0.9834);">Help</div>
<div class="t" style="left:1641.00px;top:70.00px;font-size:22.5px;color:#3b3a39;transform:scaleX(0.9725);">Try the new Outlook</div>
<div class="t" style="left:1876.20px;top:72.00px;font-size:15px;color:#3b3a39;transform:scaleX(1.0337);">Off</div>
<div class="t" style="left:135.50px;top:124.00px;font-size:22px;color:#3b3a39;transform:scaleX(0.9661);">Show Focused Inbox</div>
<div class="t" style="left:404.00px;top:124.00px;font-size:22px;color:#3b3a39;transform:scaleX(0.9711);">Change View</div>
<div class="t" style="left:610.60px;top:124.00px;font-size:22px;color:#3b3a39;transform:scaleX(0.9861);">Current View</div>
<div class="t" style="left:825.60px;top:124.00px;font-size:22px;color:#3b3a39;transform:scaleX(0.9722);">Arrange By</div>
<div class="t" style="left:1013.00px;top:124.00px;font-size:22px;color:#3b3a39;transform:scaleX(0.9424);">Reverse Sort</div>
<div class="t" style="left:1204.00px;top:124.00px;font-size:22px;color:#3b3a39;transform:scaleX(0.9692);">Use Tighter Spacing</div>
<div class="t" style="left:1457.50px;top:124.00px;font-size:22px;color:#3b3a39;transform:scaleX(0.9612);">Layout</div>
<div class="t" style="left:1600.00px;top:124.00px;font-size:22px;color:#3b3a39;transform:scaleX(0.9737);">Immersive Reader</div>
<div class="t" style="left:112.80px;top:194.00px;font-size:24px;color:#323130;transform:scaleX(0.9290);">Favorites</div>
<div class="t" style="left:112.00px;top:239.00px;font-size:19px;color:#201f1e;font-weight:700;transform:scaleX(1.0262);">Inbox</div>
<div class="t" style="left:112.00px;top:278.00px;font-size:19.5px;color:#323130;transform:scaleX(0.9655);">Sent Items</div>
<div class="t" style="left:112.00px;top:317.00px;font-size:19.5px;color:#323130;transform:scaleX(0.9891);">Deleted Items</div>
<div class="t" style="left:112.00px;top:378.00px;font-size:24px;color:#323130;transform:scaleX(0.9656);">speced@kihiw.ca</div>
<div class="t" style="left:112.00px;top:419.00px;font-size:19.5px;color:#323130;transform:scaleX(1.0062);">Inbox</div>
<div class="t" style="left:112.00px;top:458.00px;font-size:19.5px;color:#323130;transform:scaleX(0.9805);">Drafts</div>
<div class="t" style="left:112.00px;top:497.00px;font-size:19.5px;color:#323130;transform:scaleX(0.9719);">Sent Items</div>
<div class="t" style="left:112.00px;top:536.00px;font-size:19.5px;color:#323130;transform:scaleX(0.9974);">Deleted Items</div>
<div class="t" style="left:112.00px;top:575.00px;font-size:19.5px;color:#323130;transform:scaleX(0.9934);">Archive</div>
<div class="t" style="left:112.00px;top:614.00px;font-size:19.5px;color:#323130;transform:scaleX(1.0073);">Conversation History</div>
<div class="t" style="left:112.00px;top:653.00px;font-size:19.5px;color:#323130;transform:scaleX(0.9436);">Junk Email</div>
<div class="t" style="left:112.00px;top:692.00px;font-size:19.5px;color:#323130;transform:scaleX(1.0433);">Outbox</div>
<div class="t" style="left:112.00px;top:731.00px;font-size:19.5px;color:#323130;transform:scaleX(0.8865);">RSS Feeds</div>
<div class="t" style="left:112.00px;top:770.00px;font-size:19.5px;color:#323130;transform:scaleX(0.9604);">Search Folders</div>
<div class="t" style="left:112.00px;top:819.00px;font-size:19px;color:#201f1e;font-weight:700;transform:scaleX(0.9562);">Groups</div>
<div class="t" style="left:366.50px;top:197.00px;font-size:23px;color:#0f6cbd;transform:scaleX(0.9783);">Focused</div>
<div class="t" style="left:482.00px;top:197.00px;font-size:23px;color:#3b3a39;transform:scaleX(1.0603);">Other</div>
<div class="t" style="left:451.40px;top:244.00px;font-size:16px;color:#6e6c6a;width:9px;overflow:hidden;">F</div>
<div class="t" style="left:464.50px;top:244.00px;font-size:16px;color:#605e5c;transform:scaleX(0.9590);">Subj...</div>
<div class="t" style="left:520.70px;top:244.00px;font-size:16px;color:#6e6c6a;width:8px;overflow:hidden;">R</div>
<div class="t" style="left:533.00px;top:244.00px;font-size:16px;color:#6e6c6a;width:9px;overflow:hidden;">S</div>
<div class="t" style="left:546.40px;top:244.00px;font-size:16px;color:#6e6c6a;width:8px;overflow:hidden;">C</div>
<div class="t" style="left:560.00px;top:244.00px;font-size:16px;color:#605e5c;transform:scaleX(0.9561);">Me...</div>
<div class="t" style="left:364.50px;top:277.00px;font-size:17px;color:#323130;font-weight:700;transform:scaleX(0.9834);">Today</div>
<div class="t" style="left:364.50px;top:420.00px;font-size:17px;color:#323130;font-weight:700;transform:scaleX(0.9584);">Yesterday</div>
<div class="t" style="left:448.80px;top:312.00px;font-size:16px;color:#201f1e;width:9px;overflow:hidden;">C</div>
<div class="t" style="left:458.00px;top:312.00px;font-size:16px;color:#201f1e;">.</div>
<div class="t" style="left:465.00px;top:312.00px;font-size:16px;color:#201f1e;transform:scaleX(0.9277);">RE: o...</div>
<div class="t" style="left:519.60px;top:312.00px;font-size:16px;color:#201f1e;width:8px;overflow:hidden;">V</div>
<div class="t" style="left:533.70px;top:312.00px;font-size:16px;color:#201f1e;width:7.5px;overflow:hidden;">4</div>
<div class="t" style="left:451.00px;top:336.00px;font-size:17px;color:#605e5c;width:93px;overflow:hidden;">Yes I will</div>
<div class="t" style="left:451.00px;top:359.00px;font-size:17px;color:#605e5c;width:93px;overflow:hidden;">come down</div>
<div class="t" style="left:451.00px;top:382.00px;font-size:17px;color:#605e5c;width:93px;overflow:hidden;">shortly.</div>
<div class="t" style="left:448.80px;top:455.00px;font-size:16px;color:#201f1e;transform:scaleX(0.8649);">H</div>
<div class="t" style="left:465.00px;top:455.00px;font-size:16px;color:#201f1e;transform:scaleX(0.8902);">Re: ...</div>
<div class="t" style="left:519.60px;top:455.00px;font-size:16px;color:#201f1e;width:8px;overflow:hidden;">T</div>
<div class="t" style="left:533.70px;top:455.00px;font-size:16px;color:#201f1e;width:7.5px;overflow:hidden;">9</div>
<div class="t" style="left:451.00px;top:479.00px;font-size:17px;color:#605e5c;width:93px;overflow:hidden;">Hello Alex</div>
<div class="t" style="left:451.00px;top:502.00px;font-size:17px;color:#605e5c;width:93px;overflow:hidden;">and</div>
<div class="t" style="left:451.00px;top:525.00px;font-size:17px;color:#605e5c;width:93px;overflow:hidden;">Bernadette,</div>
<div class="t" style="left:448.80px;top:566.00px;font-size:16px;color:#201f1e;width:9px;overflow:hidden;">A</div>
<div class="t" style="left:458.00px;top:566.00px;font-size:16px;color:#201f1e;">.</div>
<div class="t" style="left:465.00px;top:566.00px;font-size:16px;color:#201f1e;transform:scaleX(0.8902);">Re: ...</div>
<div class="t" style="left:519.60px;top:566.00px;font-size:16px;color:#201f1e;width:8px;overflow:hidden;">T</div>
<div class="t" style="left:533.70px;top:566.00px;font-size:16px;color:#201f1e;width:7.5px;overflow:hidden;">7</div>
<div class="t" style="left:451.00px;top:590.00px;font-size:17px;color:#605e5c;width:93px;overflow:hidden;">Monday</div>
<div class="t" style="left:451.00px;top:613.00px;font-size:17px;color:#605e5c;width:93px;overflow:hidden;">April 24 is</div>
<div class="t" style="left:451.00px;top:636.00px;font-size:17px;color:#605e5c;width:93px;overflow:hidden;">the better</div>
<div class="t" style="left:448.80px;top:677.00px;font-size:16px;color:#201f1e;transform:scaleX(0.8649);">H</div>
<div class="t" style="left:465.00px;top:677.00px;font-size:16px;color:#201f1e;transform:scaleX(0.8902);">Re: ...</div>
<div class="t" style="left:519.60px;top:677.00px;font-size:16px;color:#201f1e;width:8px;overflow:hidden;">T</div>
<div class="t" style="left:533.70px;top:677.00px;font-size:16px;color:#201f1e;width:7.5px;overflow:hidden;">1</div>
<div class="t" style="left:451.00px;top:701.00px;font-size:17px;color:#605e5c;width:93px;overflow:hidden;">Hello all!   I</div>
<div class="t" style="left:451.00px;top:724.00px;font-size:17px;color:#605e5c;width:93px;overflow:hidden;">am</div>
<div class="t" style="left:451.00px;top:747.00px;font-size:17px;color:#605e5c;width:93px;overflow:hidden;">supposed to</div>
<div class="t" style="left:448.80px;top:788.00px;font-size:16px;color:#201f1e;width:9px;overflow:hidden;">K</div>
<div class="t" style="left:458.00px;top:788.00px;font-size:16px;color:#201f1e;">.</div>
<div class="t" style="left:465.00px;top:788.00px;font-size:16px;color:#201f1e;transform:scaleX(0.9747);">Re: P...</div>
<div class="t" style="left:519.60px;top:788.00px;font-size:16px;color:#201f1e;width:8px;overflow:hidden;">T</div>
<div class="t" style="left:533.70px;top:788.00px;font-size:16px;color:#201f1e;width:7.5px;overflow:hidden;">6</div>
<div class="t" style="left:451.00px;top:812.00px;font-size:17px;color:#605e5c;width:93px;overflow:hidden;">Ok - I am</div>
<div class="t" style="left:451.00px;top:835.00px;font-size:17px;color:#605e5c;width:93px;overflow:hidden;">sorry - I was</div>
<div class="t" style="left:451.00px;top:858.00px;font-size:17px;color:#605e5c;width:93px;overflow:hidden;">in the</div>
<div class="t" style="left:448.80px;top:899.00px;font-size:16px;color:#201f1e;width:9px;overflow:hidden;">K</div>
<div class="t" style="left:458.00px;top:899.00px;font-size:16px;color:#201f1e;">.</div>
<div class="t" style="left:465.00px;top:899.00px;font-size:16px;color:#201f1e;transform:scaleX(0.9747);">Re: P...</div>
<div class="t" style="left:519.60px;top:899.00px;font-size:16px;color:#201f1e;width:8px;overflow:hidden;">T</div>
<div class="t" style="left:533.70px;top:899.00px;font-size:16px;color:#201f1e;width:7.5px;overflow:hidden;">7</div>
<div class="t" style="left:451.00px;top:923.00px;font-size:17px;color:#605e5c;width:93px;overflow:hidden;">Can you call</div>
<div class="t" style="left:451.00px;top:946.00px;font-size:17px;color:#605e5c;width:93px;overflow:hidden;">me at</div>
<div class="t" style="left:451.00px;top:969.00px;font-size:17px;color:#605e5c;width:93px;overflow:hidden;">13064669194</div>
<div class="t" style="left:735.50px;top:194.00px;font-size:30px;color:#000000;transform:scaleX(0.9897);">RE: outlook</div>
<div class="t" style="left:824.80px;top:258.00px;font-size:23.5px;color:#323130;transform:scaleX(1.0011);">Clint Fourstar</div>
<div class="t" style="left:824.00px;top:292.00px;font-size:19.5px;color:#605e5c;transform:scaleX(1.0287);">To</div>
<div class="t" style="left:882.00px;top:292.00px;font-size:19.5px;color:#323130;transform:scaleX(0.9572);">Bernadette Keshane</div>
<div class="t" style="left:1818.00px;top:291.00px;font-size:20px;color:#605e5c;transform:scaleX(0.9811);">8:55 AM</div>
<div class="t" style="left:764.00px;top:340.00px;font-size:20px;color:#323130;transform:scaleX(0.9700);">General\All Employees (unrestricted)</div>
<div class="t" style="left:733.40px;top:389.00px;font-size:20px;color:#323130;transform:scaleX(0.9487);">Start your reply all with:</div>
<div class="t" style="left:954.70px;top:389.00px;font-size:20px;color:#0f6cbd;transform:scaleX(0.9156);">Thank you!</div>
<div class="t" style="left:1080.30px;top:389.00px;font-size:20px;color:#0f6cbd;transform:scaleX(0.9157);">Great! See you then!</div>
<div class="t" style="left:1284.00px;top:389.00px;font-size:20px;color:#0f6cbd;transform:scaleX(0.9114);">Great, thanks!</div>
<div class="t" style="left:1454.60px;top:389.00px;font-size:20px;color:#0f6cbd;transform:scaleX(0.8879);">Feedback</div>
<div class="t" style="left:724.00px;top:450.00px;font-size:17px;color:#000000;transform:scaleX(0.9980);">Yes I will come down shortly.</div>
<div class="t" style="left:724.00px;top:503.00px;font-size:17px;color:#000000;font-weight:700;transform:scaleX(0.9264);">From: </div>
<div class="t" style="left:773.00px;top:503.00px;font-size:17px;color:#000000;transform:scaleX(0.9666);">Bernadette Keshane &lt;</div>
<div class="t" style="left:937.00px;top:503.00px;font-size:17px;color:#0563c1;transform:scaleX(0.9878);text-decoration:underline;">speced@kihiw.ca</div>
<div class="t" style="left:1067.00px;top:503.00px;font-size:17px;color:#000000;transform:scaleX(0.9057);">&gt;</div>
<div class="t" style="left:724.00px;top:527.00px;font-size:17px;color:#000000;font-weight:700;transform:scaleX(0.9209);">Sent: </div>
<div class="t" style="left:767.50px;top:527.00px;font-size:17px;color:#000000;transform:scaleX(0.9955);">Wednesday, April 19, 2023 8:34 AM</div>
<div class="t" style="left:724.00px;top:550.00px;font-size:17px;color:#000000;font-weight:700;transform:scaleX(0.9363);">To: </div>
<div class="t" style="left:752.00px;top:550.00px;font-size:17px;color:#000000;transform:scaleX(0.9813);">Clint Fourstar &lt;</div>
<div class="t" style="left:866.50px;top:550.00px;font-size:17px;color:#0563c1;transform:scaleX(1.0187);text-decoration:underline;">admin.clint@kihiw.ca</div>
<div class="t" style="left:1027.50px;top:550.00px;font-size:17px;color:#000000;transform:scaleX(0.9057);">&gt;</div>
<div class="t" style="left:724.00px;top:575.00px;font-size:17px;color:#000000;font-weight:700;transform:scaleX(0.9123);">Subject: </div>
<div class="t" style="left:789.50px;top:575.00px;font-size:17px;color:#000000;transform:scaleX(1.0396);">outlook</div>
<div class="t" style="left:724.00px;top:622.00px;font-size:17px;color:#000000;transform:scaleX(0.9940);">Good day, Clint. Can you come and look at my outlook today. It’s being weird.</div>
<div class="t" style="left:724.00px;top:670.00px;font-size:17px;color:#000000;transform:scaleX(0.9645);">Bernadette Keshane B.Ed; M.Ed</div>
<div class="t" style="left:724.00px;top:694.00px;font-size:17px;color:#000000;transform:scaleX(0.9701);">Special Education Teacher</div>
<div class="t" style="left:724.00px;top:718.00px;font-size:17px;color:#000000;transform:scaleX(0.9806);">Kihiw Waciston School</div>
<div class="t" style="left:724.00px;top:741.00px;font-size:17px;color:#0563c1;transform:scaleX(0.9840);text-decoration:underline;">speced@kihiw.ca</div>
<div class="t" style="left:724.00px;top:765.00px;font-size:17px;color:#000000;transform:scaleX(0.9824);">(306)466-4959 ext 432</div>
<div class="t" style="left:724.00px;top:789.00px;font-size:17px;color:#000000;transform:scaleX(1.0021);">Treaty Six Territory</div>
<div class="t" style="left:724.00px;top:813.00px;font-size:17px;color:#000000;transform:scaleX(0.9238);">MLCN</div>
<div class="t" style="left:10.50px;top:1005.00px;font-size:17.5px;color:#605e5c;transform:scaleX(0.9545);">Items: 790</div>
<div class="t" style="left:1037.00px;top:1004.00px;font-size:18px;color:#605e5c;transform:scaleX(0.9557);">This folder is up to date.</div>
<div class="t" style="left:1246.40px;top:1004.00px;font-size:18px;color:#605e5c;transform:scaleX(0.9493);">Connected to: Microsoft Exchange</div>
<div class="t" style="left:1869.50px;top:1004.00px;font-size:18px;color:#605e5c;transform:scaleX(0.8687);">100%</div>
<div class="t" style="left:110.00px;top:1046.00px;font-size:19.5px;color:#3b2f26;transform:scaleX(0.9457);">Type here to search</div>
<div class="t" style="left:1495.50px;top:1046.00px;font-size:19.5px;color:#ffffff;transform:scaleX(0.9028);">-1°C  Cloudy</div>
<div class="t" style="left:1786.00px;top:1036.00px;font-size:16px;color:#ffffff;transform:scaleX(0.8642);">3:32 PM</div>
<div class="t" style="left:1778.00px;top:1058.00px;font-size:16px;color:#ffffff;transform:scaleX(0.9412);">4/19/2023</div>
</body></html>
